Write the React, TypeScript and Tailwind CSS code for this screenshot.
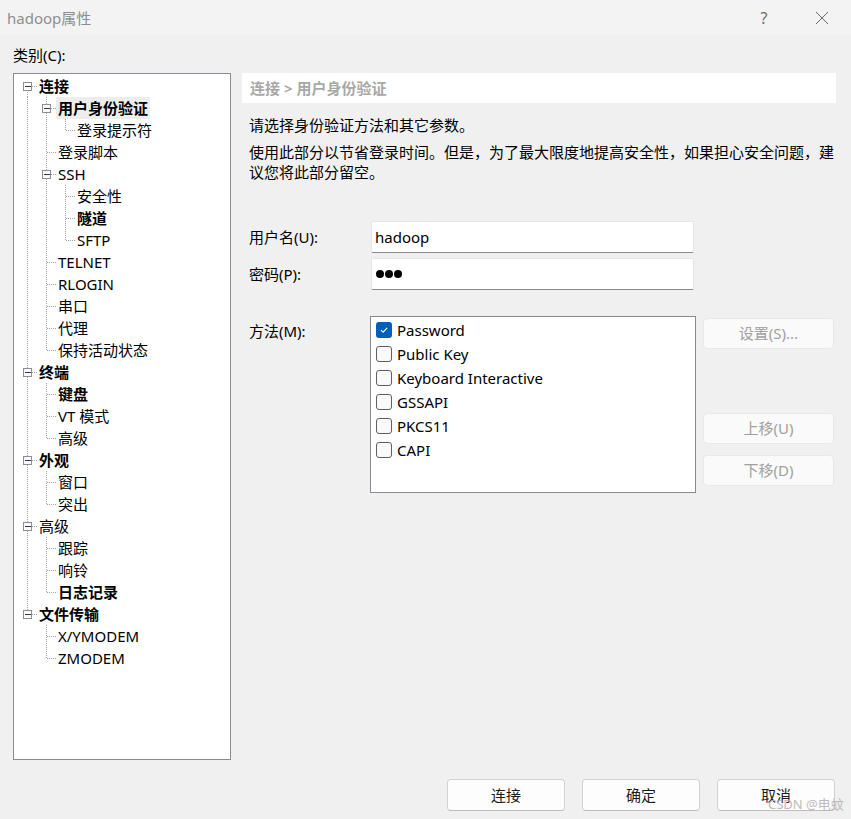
import React from 'react';

type Node = { t: string; b?: boolean; sel?: boolean; c?: Node[] };

const TREE: Node[] = [
  {
    t: '连接',
    b: true,
    c: [
      { t: '用户身份验证', b: true, sel: true, c: [{ t: '登录提示符' }] },
      { t: '登录脚本' },
      { t: 'SSH', c: [{ t: '安全性' }, { t: '隧道', b: true }, { t: 'SFTP' }] },
      { t: 'TELNET' },
      { t: 'RLOGIN' },
      { t: '串口' },
      { t: '代理' },
      { t: '保持活动状态' },
    ],
  },
  { t: '终端', b: true, c: [{ t: '键盘', b: true }, { t: 'VT 模式' }, { t: '高级' }] },
  { t: '外观', b: true, c: [{ t: '窗口' }, { t: '突出' }] },
  { t: '高级', c: [{ t: '跟踪' }, { t: '响铃' }, { t: '日志记录', b: true }] },
  { t: '文件传输', b: true, c: [{ t: 'X/YMODEM' }, { t: 'ZMODEM' }] },
];

type Row = {
  t: string;
  b?: boolean;
  sel?: boolean;
  level: number;
  last: boolean;
  first: boolean;
  hasKids: boolean;
  cont: boolean[];
};

function flatten(nodes: Node[], level: number, cont: boolean[], out: Row[]): Row[] {
  nodes.forEach((n, i) => {
    const last = i === nodes.length - 1;
    out.push({
      t: n.t,
      b: n.b,
      sel: n.sel,
      level,
      last,
      first: level === 0 && i === 0,
      hasKids: !!n.c,
      cont,
    });
    if (n.c) flatten(n.c, level + 1, [...cont, !last], out);
  });
  return out;
}

const ROWS = flatten(TREE, 0, [], []);
const cx = (l: number) => 13.5 + 19 * l;
const DOT = '#a0a0a0';

function TreeRow({ r }: { r: Row }) {
  const c = cx(r.level);
  const w = c + 9.5;
  return (
    <div className="flex h-[22px] items-center">
      <svg width={w} height={22} className="shrink-0" shapeRendering="crispEdges">
        {r.cont.map((on, d) =>
          on ? (
            <line key={d} x1={cx(d)} y1={0} x2={cx(d)} y2={22} stroke={DOT} strokeDasharray="1 1" />
          ) : null
        )}
        <line
          x1={c}
          y1={r.first ? 11 : 0}
          x2={c}
          y2={r.last ? 12 : 22}
          stroke={DOT}
          strokeDasharray="1 1"
        />
        <line x1={c + 0.5} y1={11.5} x2={w} y2={11.5} stroke={DOT} strokeDasharray="1 1" />
        {r.hasKids && (
          <g>
            <rect x={c - 4} y={7.5} width={8} height={8} fill="#fbfbfb" stroke="#8f8f8f" />
            <line x1={c - 2.5} y1={11.5} x2={c + 3.5} y2={11.5} stroke="#23395c" />
          </g>
        )}
      </svg>
      <span
        className={
          'h-[22px] px-[2px] text-[15px] leading-[22px] whitespace-nowrap text-black ' +
          (r.b ? 'font-bold ' : '') +
          (r.sel ? 'bg-[#ededed]' : '')
        }
      >
        {r.t}
      </span>
    </div>
  );
}

function Check({ checked }: { checked?: boolean }) {
  if (checked) {
    return (
      <span className="flex h-[16px] w-[16px] shrink-0 items-center justify-center rounded-[3px] bg-[#005fb8]">
        <svg width="10" height="10" viewBox="0 0 10 10">
          <path d="M2 5.2 L4.1 7.2 L8.2 2.8" fill="none" stroke="white" strokeWidth="1.1" />
        </svg>
      </span>
    );
  }
  return (
    <span className="h-[16px] w-[16px] shrink-0 rounded-[3px] border border-[#5f5f5f] bg-[#f9f9f9]" />
  );
}

const METHODS = [
  { t: 'Password', c: true },
  { t: 'Public Key' },
  { t: 'Keyboard Interactive' },
  { t: 'GSSAPI' },
  { t: 'PKCS11' },
  { t: 'CAPI' },
];

export default function App() {
  return (
    <div
      className="relative h-[819px] w-[851px] overflow-hidden bg-[#f0f0f0] text-black"
      style={{ fontFamily: "'Noto Sans', 'Noto Sans CJK SC', sans-serif" }}
    >
      {/* Title bar */}
      <div className="flex h-[35px] items-center bg-[#f3f3f3] pl-[7px]">
        <span className="text-[15px] leading-[20px] text-[#8e8e8e]">hadoop属性</span>
        <div className="ml-auto flex items-center">
          <span className="w-[20px] text-center text-[16px] leading-[20px] text-[#6e6e6e]">?</span>
          <span className="ml-[40px] mr-[21px] flex h-[20px] w-[16px] items-center justify-center">
            <svg width="14" height="14" viewBox="0 0 14 14">
              <path d="M1 1 L13 13 M13 1 L1 13" stroke="#6a6a6a" strokeWidth="1" />
            </svg>
          </span>
        </div>
      </div>

      <div className="px-[13px]">
        <div className="mt-[10px] h-[20px] text-[15px] leading-[20px]">类别(C):</div>

        <div className="mt-[8px] flex">
          {/* Tree */}
          <div className="h-[687px] w-[218px] shrink-0 border border-[#878b92] bg-white pt-[1px]">
            {ROWS.map((r, i) => (
              <TreeRow key={i} r={r} />
            ))}
          </div>

          {/* Right panel */}
          <div className="ml-[11px] w-[594px]">
            <div className="flex h-[30px] items-center bg-white px-[8px] text-[15px] font-bold text-[#a8a8a8]">
              连接 &gt; 用户身份验证
            </div>
            <div className="px-[7px] text-[15px] leading-[20px]">
              <div className="mt-[12px] whitespace-nowrap">请选择身份验证方法和其它参数。</div>
              <div className="mt-[7px] whitespace-nowrap">
                使用此部分以节省登录时间。但是，为了最大限度地提高安全性，如果担心安全问题，建
              </div>
              <div className="whitespace-nowrap">议您将此部分留空。</div>
            </div>

            <div className="mt-[39px] flex items-center pl-[7px]">
              <span className="w-[122px] text-[15px] leading-[20px]">用户名(U):</span>
              <div className="flex h-[32px] w-[323px] items-center rounded-[2px] border border-[#e6e6e6] border-b-[#8a8a8a] bg-white px-[3px] text-[15px]">
                hadoop
              </div>
            </div>
            <div className="mt-[5px] flex items-center pl-[7px]">
              <span className="w-[122px] text-[15px] leading-[20px]">密码(P):</span>
              <div className="flex h-[32px] w-[323px] items-center gap-[1px] rounded-[2px] border border-[#e6e6e6] border-b-[#8a8a8a] bg-white px-[4px]">
                <span className="h-[8px] w-[8px] rounded-full bg-black" />
                <span className="h-[8px] w-[8px] rounded-full bg-black" />
                <span className="h-[8px] w-[8px] rounded-full bg-black" />
              </div>
            </div>

            <div className="mt-[26px] flex items-start pl-[7px]">
              <span className="mt-[5px] w-[121px] text-[15px] leading-[20px]">方法(M):</span>
              <div className="h-[177px] w-[326px] border border-[#868a91] bg-white pl-[5px] pt-[1px]">
                {METHODS.map((m) => (
                  <div key={m.t} className="flex h-[24px] items-center gap-[5px]">
                    <Check checked={m.c} />
                    <span className="text-[15px] leading-[20px] whitespace-nowrap">{m.t}</span>
                  </div>
                ))}
              </div>
              <div className="ml-[7px] flex flex-col pt-[2px]">
                <button className="h-[31px] w-[131px] rounded-[4px] border border-[#e8e8e8] bg-[#fafafa] text-[15px] text-[#a0a0a0]">
                  设置(S)...
                </button>
                <button className="mt-[64px] h-[31px] w-[131px] rounded-[4px] border border-[#e8e8e8] bg-[#fafafa] text-[15px] text-[#a0a0a0]">
                  上移(U)
                </button>
                <button className="mt-[11px] h-[31px] w-[131px] rounded-[4px] border border-[#e8e8e8] bg-[#fafafa] text-[15px] text-[#a0a0a0]">
                  下移(D)
                </button>
              </div>
            </div>
          </div>
        </div>
      </div>

      {/* Bottom buttons */}
      <div className="mt-[19px] flex justify-end gap-[17px] pr-[16px]">
        {['连接', '确定', '取消'].map((t) => (
          <button
            key={t}
            className="h-[32px] w-[118px] rounded-[4px] border border-[#d2d2d2] border-b-[#bdbdbd] bg-[#fdfdfd] text-[15px] text-[#1a1a1a]"
          >
            {t}
          </button>
        ))}
      </div>

      <span className="absolute left-[768px] top-[795px] text-[13px] leading-[18px] text-[#b5b5b5] opacity-90">
        CSDN @电蚊
      </span>
    </div>
  );
}
